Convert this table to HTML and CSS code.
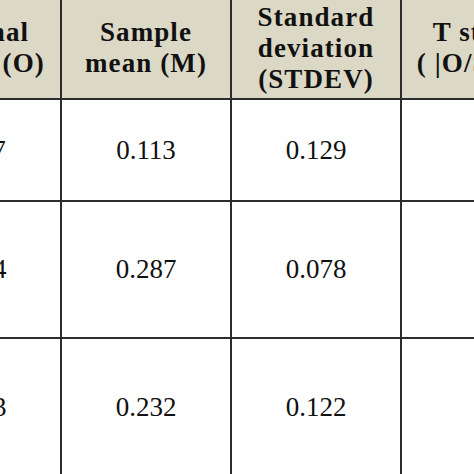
FILE: index.html
```html
<!DOCTYPE html>
<html>
<head>
<meta charset="utf-8">
<link rel="stylesheet" href="styles.css">
</head>
<body>
<div class="frame">
  <table class="stats">
    <colgroup>
      <col class="c"><col class="c"><col class="c"><col class="c wide">
    </colgroup>
    <thead>
      <tr class="head">
        <th>Original<br>sample (O)</th>
        <th>Sample<br>mean (M)</th>
        <th>Standard<br>deviation<br>(STDEV)</th>
        <th>T statistics<br>( |O/STDEV|)</th>
      </tr>
    </thead>
    <tbody>
      <tr class="r1"><td>0.117</td><td>0.113</td><td>0.129</td><td></td></tr>
      <tr class="r2"><td>0.284</td><td>0.287</td><td>0.078</td><td></td></tr>
      <tr class="r3"><td>0.233</td><td>0.232</td><td>0.122</td><td></td></tr>
    </tbody>
  </table>
</div>
</body>
</html>
```
FILE: styles.css
```css
html, body {
  margin: 0;
  padding: 0;
  background: #ffffff;
}
.frame {
  width: 474px;
  height: 474px;
  overflow: hidden;
  position: relative;
}
.stats {
  border-collapse: collapse;
  table-layout: fixed;
  width: 710px;
  margin-left: -110px;
  margin-top: -4px;
  font-family: "Liberation Serif", "Times New Roman", serif;
  color: #111111;
}
.stats col.c {
  width: 170px;
}
.stats col.wide {
  width: 200px;
}
.stats th,
.stats td {
  border: 2px solid #2c2c2c;
  text-align: center;
  vertical-align: middle;
  padding: 0;
}
.head th {
  background: #dcd8c6;
  font-weight: bold;
  font-size: 27px;
  line-height: 31px;
  letter-spacing: 1.1px;
  height: 100px;
}
.stats td {
  font-size: 27px;
  font-weight: normal;
}
.r1 td { height: 100px; }
.r2 td { height: 135px; }
.r3 td { height: 136px; }
```
